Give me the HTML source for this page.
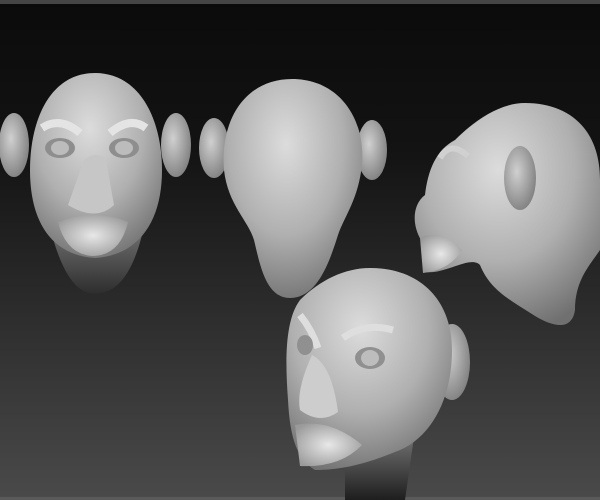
<!DOCTYPE html>
<html><head><style>
html,body{margin:0;padding:0;width:600px;height:500px;overflow:hidden;background:#1a1a1a}
</style></head><body>
<svg width="600" height="500" viewBox="0 0 600 500" xmlns="http://www.w3.org/2000/svg">
<defs>
<linearGradient id="bg" x1="0" y1="0" x2="0" y2="1">
<stop offset="0" stop-color="#0b0b0b"/><stop offset="0.3" stop-color="#131313"/><stop offset="1" stop-color="#4a4a4a"/>
</linearGradient>
<radialGradient id="sk" cx="0.45" cy="0.3" r="0.75">
<stop offset="0" stop-color="#dcdcdc"/><stop offset="0.55" stop-color="#b0b0b0"/><stop offset="1" stop-color="#707070"/>
</radialGradient>
<radialGradient id="ear" cx="0.4" cy="0.4" r="0.7">
<stop offset="0" stop-color="#d0d0d0"/><stop offset="1" stop-color="#7a7a7a"/>
</radialGradient>
<linearGradient id="neck" x1="0" y1="0" x2="0" y2="1">
<stop offset="0" stop-color="#7a7a7a"/><stop offset="1" stop-color="#1e1e1e"/>
</linearGradient>
<linearGradient id="jaw" x1="0" y1="0" x2="0" y2="1">
<stop offset="0" stop-color="#6a6a6a"/><stop offset="1" stop-color="#2e2e2e"/>
</linearGradient>
<radialGradient id="beard" cx="0.5" cy="0.5" r="0.6">
<stop offset="0" stop-color="#e8e8e8"/><stop offset="1" stop-color="#9a9a9a"/>
</radialGradient>
</defs>
<rect width="600" height="500" fill="url(#bg)"/>
<rect width="600" height="4" fill="#464646"/>
<rect y="497" width="600" height="3" fill="#5a5a5a"/>

<!-- Head 1 -->
<path d="M52 235 Q70 300 100 293 Q128 290 142 235 Z" fill="url(#jaw)"/>
<ellipse cx="14" cy="145" rx="15" ry="32" fill="url(#ear)"/>
<ellipse cx="176" cy="145" rx="15" ry="32" fill="url(#ear)"/>
<path d="M95 73 C140 73 162 120 162 170 C162 220 140 255 95 258 C50 255 30 220 30 170 C30 120 50 73 95 73 Z" fill="url(#sk)"/>
<path d="M42 128 Q60 116 80 133 M110 133 Q130 116 146 128" stroke="#e4e4e4" stroke-width="8" fill="none"/>
<ellipse cx="60" cy="148" rx="15" ry="10" fill="#8e8e8e"/><ellipse cx="124" cy="148" rx="15" ry="10" fill="#8e8e8e"/>
<ellipse cx="60" cy="148" rx="9" ry="7" fill="#bcbcbc"/><ellipse cx="124" cy="148" rx="9" ry="7" fill="#bcbcbc"/>
<path d="M84 160 Q96 150 106 160 L114 205 Q96 222 68 205 Z" fill="#c6c6c6"/>
<path d="M58 222 Q95 208 128 222 Q120 256 92 256 Q66 254 58 222 Z" fill="url(#beard)"/>

<!-- Head 2 (back) -->
<ellipse cx="214" cy="148" rx="15" ry="30" fill="url(#ear)"/>
<ellipse cx="372" cy="150" rx="15" ry="30" fill="url(#ear)"/>
<path d="M292 79 C340 79 366 120 362 165 C358 200 345 215 338 235 C330 260 318 298 290 298 C266 298 260 265 254 240 C248 220 228 205 224 170 C220 120 245 79 292 79 Z" fill="url(#sk)"/>

<!-- Head 3 (profile) -->
<path d="M525 103 C570 103 600 130 600 180 L600 250 C590 265 575 280 575 310 C572 330 555 328 535 316 C510 300 490 290 480 265 C470 255 445 275 425 272 L421 240 C412 225 412 205 425 195 C428 170 436 150 455 140 C475 120 500 103 525 103 Z" fill="url(#sk)"/>
<ellipse cx="520" cy="178" rx="16" ry="32" fill="url(#ear)"/>
<path d="M420 238 Q440 228 462 250 Q450 270 423 273 Z" fill="url(#beard)"/>
<path d="M440 158 Q450 140 468 156" stroke="#d0d0d0" stroke-width="6" fill="none"/>

<!-- Head 4 -->
<path d="M345 440 L415 430 L405 500 L345 500 Z" fill="url(#neck)"/>
<ellipse cx="452" cy="362" rx="18" ry="38" fill="url(#ear)"/>
<path d="M370 268 C420 268 452 300 452 350 C452 400 430 440 395 452 C370 462 345 470 315 470 C298 460 290 440 288 400 C285 360 285 320 300 300 C320 280 345 268 370 268 Z" fill="url(#sk)"/>
<path d="M343 338 Q365 322 393 330 M300 315 Q312 330 318 348" stroke="#dedede" stroke-width="7" fill="none"/>
<ellipse cx="370" cy="358" rx="15" ry="11" fill="#909090"/><ellipse cx="370" cy="358" rx="9" ry="8" fill="#bdbdbd"/>
<ellipse cx="305" cy="345" rx="8" ry="10" fill="#909090"/>
<path d="M312 355 Q332 365 338 412 Q320 425 300 410 Q296 390 312 355 Z" fill="#cdcdcd"/>
<path d="M295 425 Q330 418 362 445 Q340 468 300 466 Z" fill="url(#beard)"/>
</svg>
</body></html>
